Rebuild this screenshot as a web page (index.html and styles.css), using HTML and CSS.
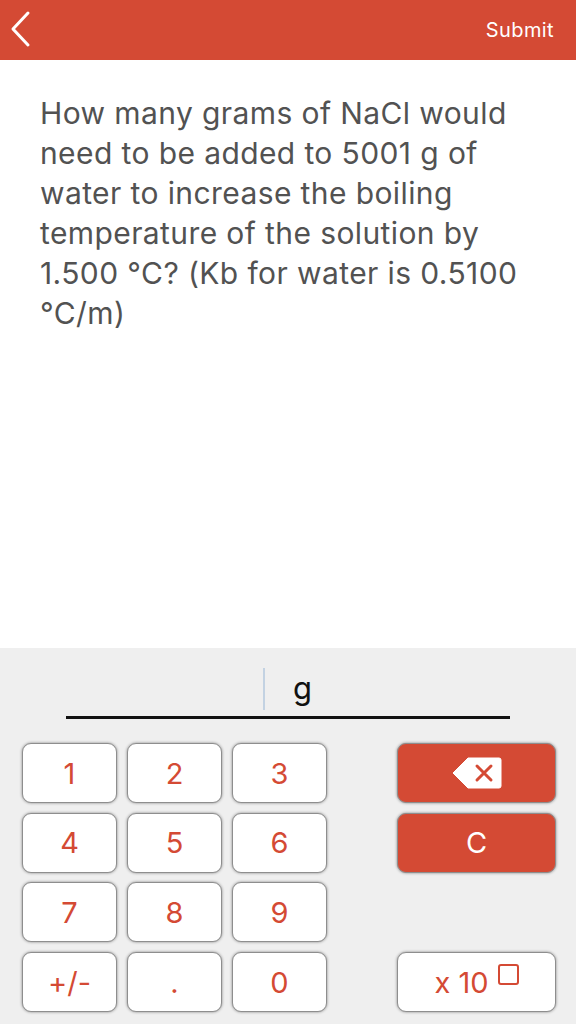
FILE: index.html
```html
<!DOCTYPE html>
<html>
<head>
<meta charset="utf-8">
<link rel="stylesheet" href="styles.css">
</head>
<body>
<div class="app">
  <header class="topbar">
    <svg class="back" width="24" height="40" viewBox="0 0 24 40">
      <polyline points="18,4 3,20 18,36" fill="none" stroke="#fff" stroke-width="3" stroke-linecap="round" stroke-linejoin="round"/>
    </svg>
    <span class="submit">Submit</span>
  </header>
  <main class="question">
    <p>How many grams of NaCl would need to be added to 5001 g of water to increase the boiling temperature of the solution by 1.500 °C? (Kb for water is 0.5100 °C/m)</p>
  </main>
  <section class="pad">
    <div class="entry">
      <span class="cursor"></span>
      <span class="unit">g</span>
    </div>
    <div class="line"></div>
    <div class="keys">
      <div class="key">1</div>
      <div class="key">2</div>
      <div class="key">3</div>
      <div class="spacer"></div>
      <div class="key red">
        <svg width="50" height="32" viewBox="0 0 50 32">
          <path d="M16 1 H47 a2 2 0 0 1 2 2 V29 a2 2 0 0 1 -2 2 H16 L1 16 Z" fill="#fff" stroke="#fff" stroke-width="1" stroke-linejoin="round"/>
          <path d="M25 9 L39 23 M39 9 L25 23" stroke="#D44A34" stroke-width="3" stroke-linecap="round"/>
        </svg>
      </div>
      <div class="key">4</div>
      <div class="key">5</div>
      <div class="key">6</div>
      <div class="spacer"></div>
      <div class="key red">C</div>
      <div class="key">7</div>
      <div class="key">8</div>
      <div class="key">9</div>
      <div class="spacer"></div>
      <div class="spacer"></div>
      <div class="key">+/-</div>
      <div class="key">.</div>
      <div class="key">0</div>
      <div class="spacer"></div>
      <div class="key exp">x 10<span class="box"></span></div>
    </div>
  </section>
</div>
</body>
</html>
```

FILE: styles.css
```css
html, body {
  margin: 0;
  padding: 0;
}
body {
  font-family: Inter, "Noto Sans", sans-serif;
  background: #fff;
}
.app {
  width: 576px;
  height: 1024px;
  display: flex;
  flex-direction: column;
  overflow: hidden;
}
.topbar {
  height: 60px;
  background: #D44A34;
  display: flex;
  align-items: center;
  justify-content: space-between;
  padding: 0 22px 0 10px;
  flex-shrink: 0;
}
.back {
  display: block;
  margin-top: -2px;
}
.submit {
  color: #fff;
  font-size: 20px;
  letter-spacing: 0.4px;
}
.question {
  flex: 1;
  padding: 0 30px 0 40px;
}
.question p {
  margin: 33px 0 0;
  font-size: 30px;
  line-height: 40px;
  color: #525252;
  letter-spacing: 0.4px;
}
.pad {
  height: 376px;
  background: #efefef;
  flex-shrink: 0;
  display: flex;
  flex-direction: column;
}
.entry {
  height: 68px;
  display: flex;
  align-items: flex-end;
  padding-left: 263px;
  box-sizing: border-box;
  padding-bottom: 6px;
}
.cursor {
  width: 2px;
  height: 42px;
  background: #c3d2e2;
}
.unit {
  margin-left: 28px;
  font-size: 31px;
  color: #111;
  line-height: 36px;
  margin-bottom: 4px;
}
.line {
  margin: 0 66px 0 66px;
  height: 3px;
  background: #111;
}
.keys {
  margin-top: 24px;
  padding-left: 22px;
  display: grid;
  grid-template-columns: 95px 95px 95px 50px 159px;
  grid-auto-rows: 60px;
  column-gap: 10px;
  row-gap: 9.7px;
}
.key {
  background: #fff;
  border-radius: 9px;
  border: 1px solid #8e8e8e;
  box-shadow: 0 0 3px rgba(0,0,0,0.45);
  box-sizing: border-box;
  display: flex;
  align-items: center;
  justify-content: center;
  color: #D44A34;
  font-size: 29px;
}
.key.red {
  background: #D44A34;
  color: #fff;
}
.key.exp {
  font-size: 29px;
}
.box {
  display: inline-block;
  width: 17px;
  height: 17px;
  border: 2px solid #D44A34;
  border-radius: 3px;
  margin-left: 9px;
  align-self: flex-start;
  margin-top: 11px;
}
```
